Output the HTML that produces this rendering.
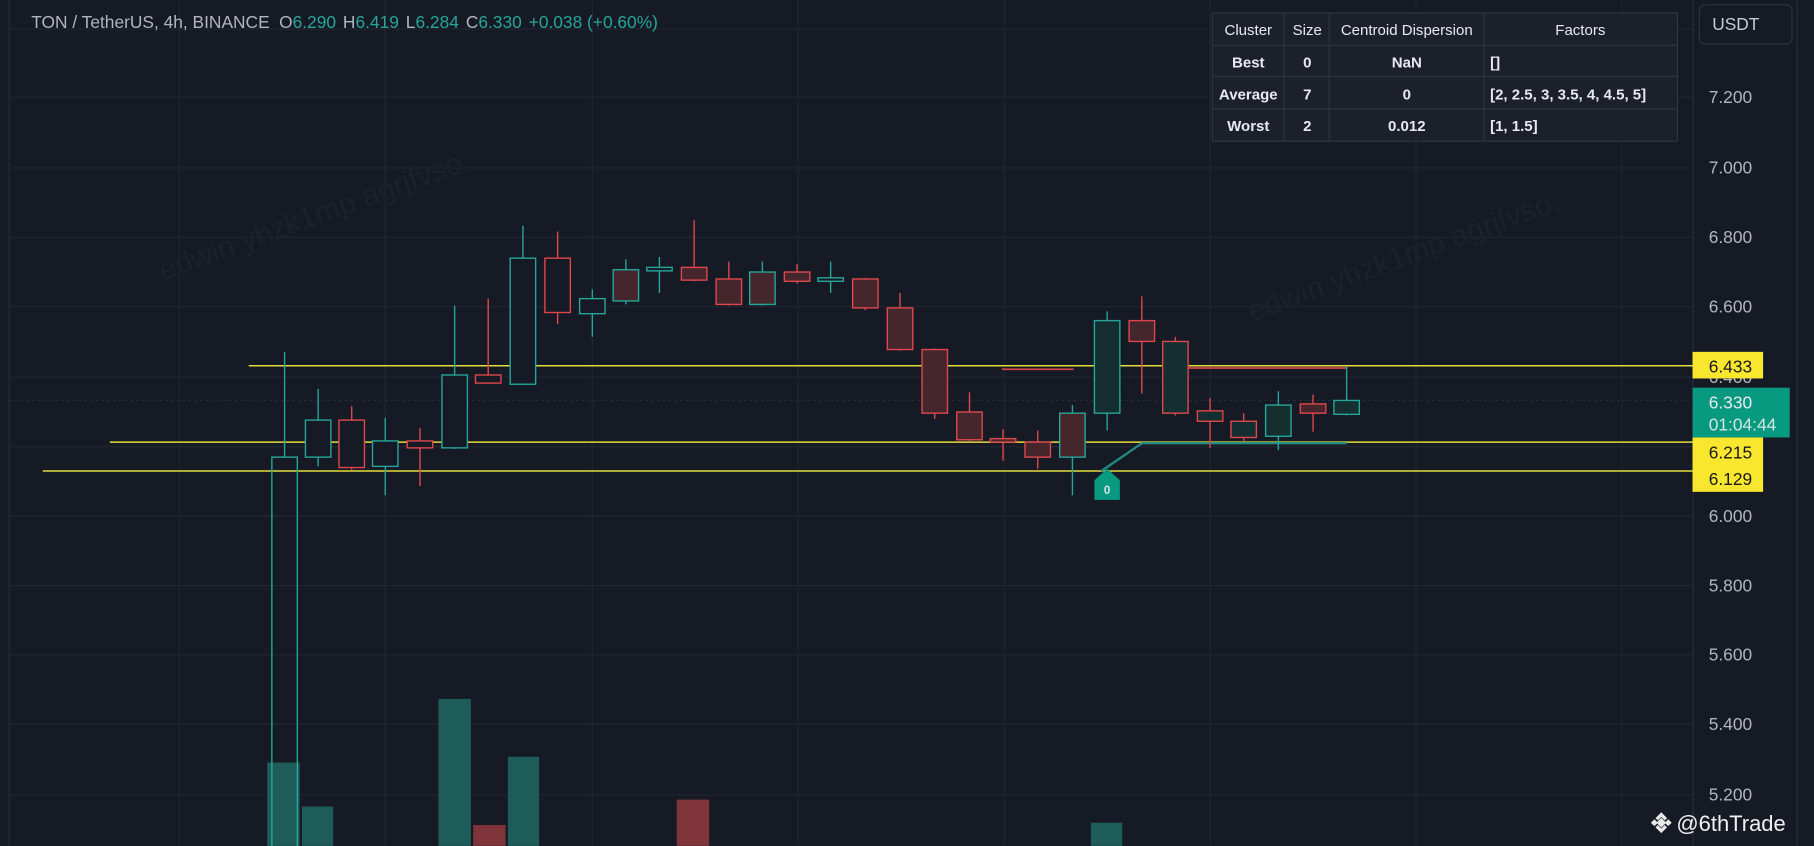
<!DOCTYPE html>
<html><head><meta charset="utf-8"><style>
html,body{margin:0;padding:0;background:#161a25;overflow:hidden}
svg{display:block}
text{font-family:"Liberation Sans","DejaVu Sans",sans-serif}
</style></head><body>
<svg width="1814" height="846" viewBox="0 0 1568 731" xmlns="http://www.w3.org/2000/svg">
<rect width="1568" height="731" fill="#161a25"/>
<!-- grid -->
<g stroke="#222631" stroke-width="1">
<line x1="8" y1="25" x2="1463" y2="25"/>
<line x1="8" y1="84" x2="1463" y2="84"/>
<line x1="8" y1="145" x2="1463" y2="145"/>
<line x1="8" y1="205" x2="1463" y2="205"/>
<line x1="8" y1="265" x2="1463" y2="265"/>
<line x1="8" y1="326" x2="1463" y2="326"/>
<line x1="8" y1="386" x2="1463" y2="386"/>
<line x1="8" y1="446" x2="1463" y2="446"/>
<line x1="8" y1="506" x2="1463" y2="506"/>
<line x1="8" y1="566" x2="1463" y2="566"/>
<line x1="8" y1="626" x2="1463" y2="626"/>
<line x1="8" y1="687" x2="1463" y2="687"/>
<line x1="155" y1="0" x2="155" y2="731"/>
<line x1="333" y1="0" x2="333" y2="731"/>
<line x1="512" y1="0" x2="512" y2="731"/>
<line x1="690" y1="0" x2="690" y2="731"/>
<line x1="868" y1="0" x2="868" y2="731"/>
<line x1="1046" y1="0" x2="1046" y2="731"/>
<line x1="1224" y1="0" x2="1224" y2="731"/>
<line x1="1402" y1="0" x2="1402" y2="731"/>
</g>
<line x1="8" y1="0" x2="8" y2="731" stroke="#2a2e39"/>
<line x1="1463.5" y1="0" x2="1463.5" y2="731" stroke="#2a2e39"/>
<line x1="1553.5" y1="0" x2="1553.5" y2="731" stroke="#2a2e39"/>
<line x1="8" y1="346" x2="1463" y2="346" stroke="#2a2e39" stroke-dasharray="2,3"/>
<!-- watermark -->
<text x="130" y="220" fill="#1d212c" font-size="26" transform="rotate(-20 200 200)">edwin yhzk1mp agrjfvso,</text>
<text x="1060" y="250" fill="#1d212c" font-size="26" transform="rotate(-20 1150 200)">edwin yhzk1mp agrjfvso,</text>
<!-- volume -->
<g fill="#1e5c5a">
<rect x="231" y="659" width="28" height="72"/>
<rect x="261" y="697" width="27" height="34"/>
<rect x="379" y="604" width="28" height="127"/>
<rect x="439" y="654" width="27" height="77"/>
<rect x="943" y="711" width="27" height="20"/>
</g>
<g fill="#7e3439">
<rect x="409" y="713" width="28" height="18"/>
<rect x="585" y="691" width="28" height="40"/>
</g>
<!-- yellow lines -->
<g stroke="#e3dc3c" stroke-width="1.3">
<line x1="215" y1="316" x2="1463" y2="316"/>
<line x1="95" y1="382" x2="1463" y2="382"/>
<line x1="37" y1="407" x2="1463" y2="407"/>
</g>
<g stroke="#d0464a" stroke-width="1.5">
<line x1="866" y1="319" x2="928" y2="319"/>
<line x1="1016" y1="318" x2="1164" y2="318"/>
</g>
<polyline points="952,407 987,383 1164,383" fill="none" stroke="#1f8a80" stroke-width="2"/>
<path d="M946,415 L957,405 L968,415 L968,432 L946,432 Z" fill="#089981"/>
<text x="957" y="427" fill="#e0e3eb" font-size="10" font-weight="bold" text-anchor="middle">0</text>
<!-- candles -->
<g stroke-width="1.2">
<g stroke="#26a69a" fill="#161a25">
<line x1="246" y1="304" x2="246" y2="395"/><rect x="235" y="395" width="22" height="340" fill="none"/>
<line x1="275" y1="336" x2="275" y2="403"/><rect x="264" y="363" width="22" height="32"/>
<line x1="333" y1="361" x2="333" y2="428"/><rect x="322" y="381" width="22" height="22"/>
<line x1="393" y1="264" x2="393" y2="388"/><rect x="382" y="324" width="22" height="63"/>
<line x1="452" y1="195" x2="452" y2="332"/><rect x="441" y="223" width="22" height="109"/>
<line x1="512" y1="250" x2="512" y2="291"/><rect x="501" y="258" width="22" height="13"/>
<line x1="541" y1="224" x2="541" y2="263"/><rect x="530" y="233" width="22" height="27" fill="#45262d"/>
<line x1="570" y1="222" x2="570" y2="253"/><rect x="559" y="231" width="22" height="3"/>
<line x1="659" y1="226" x2="659" y2="264"/><rect x="648" y="235" width="22" height="28" fill="#45262d"/>
<line x1="718" y1="226" x2="718" y2="253"/><rect x="707" y="240" width="22" height="3"/>
<line x1="927" y1="350" x2="927" y2="428"/><rect x="916" y="357" width="22" height="38" fill="#45262d"/>
<line x1="957" y1="269" x2="957" y2="372"/><rect x="946" y="277" width="22" height="80" fill="#152f30"/>
<line x1="1105" y1="338" x2="1105" y2="389"/><rect x="1094" y="350" width="22" height="27" fill="#152f30"/>
<line x1="1164" y1="317" x2="1164" y2="359"/><rect x="1153" y="346" width="22" height="12" fill="#152f30"/>
</g>
<g stroke="#e0474c" fill="#161a25">
<line x1="304" y1="351" x2="304" y2="406"/><rect x="293" y="363" width="22" height="41"/>
<line x1="363" y1="370" x2="363" y2="420"/><rect x="352" y="381" width="22" height="6"/>
<line x1="422" y1="258" x2="422" y2="332"/><rect x="411" y="324" width="22" height="7"/>
<line x1="482" y1="200" x2="482" y2="280"/><rect x="471" y="223" width="22" height="47"/>
<line x1="600" y1="190" x2="600" y2="243"/><rect x="589" y="231" width="22" height="11" fill="#45262d"/>
<line x1="630" y1="226" x2="630" y2="264"/><rect x="619" y="241" width="22" height="22" fill="#45262d"/>
<line x1="689" y1="228" x2="689" y2="245"/><rect x="678" y="235" width="22" height="8" fill="#45262d"/>
<line x1="748" y1="240" x2="748" y2="268"/><rect x="737" y="241" width="22" height="25" fill="#45262d"/>
<line x1="778" y1="253" x2="778" y2="303"/><rect x="767" y="266" width="22" height="36" fill="#45262d"/>
<line x1="808" y1="301" x2="808" y2="362"/><rect x="797" y="302" width="22" height="55" fill="#45262d"/>
<line x1="838" y1="339" x2="838" y2="381"/><rect x="827" y="356" width="22" height="24" fill="#45262d"/>
<line x1="867" y1="371" x2="867" y2="398"/><rect x="856" y="379" width="22" height="3" fill="#45262d"/>
<line x1="897" y1="372" x2="897" y2="405"/><rect x="886" y="382" width="22" height="13" fill="#45262d"/>
<line x1="987" y1="256" x2="987" y2="340"/><rect x="976" y="277" width="22" height="18" fill="#45262d"/>
<line x1="1016" y1="291" x2="1016" y2="359"/><rect x="1005" y="295" width="22" height="62" fill="#152f30"/>
<line x1="1046" y1="344" x2="1046" y2="387"/><rect x="1035" y="355" width="22" height="9" fill="#152f30"/>
<line x1="1075" y1="357" x2="1075" y2="381"/><rect x="1064" y="364" width="22" height="14" fill="#152f30"/>
<line x1="1135" y1="341" x2="1135" y2="373"/><rect x="1124" y="349" width="22" height="8" fill="#45262d"/>
</g>
</g>
<!-- header -->
<text x="27" y="24" font-size="15" fill="#b2b5be">TON / TetherUS, 4h, BINANCE <tspan dx="4">O</tspan><tspan fill="#26a69a">6.290</tspan><tspan dx="6">H</tspan><tspan fill="#26a69a">6.419</tspan><tspan dx="6">L</tspan><tspan fill="#26a69a">6.284</tspan><tspan dx="6">C</tspan><tspan fill="#26a69a">6.330</tspan><tspan dx="6" fill="#26a69a">+0.038 (+0.60%)</tspan></text>
<!-- table -->
<g>
<rect x="1048" y="11" width="402" height="111" fill="#1c202b" stroke="#30343f"/>
<g stroke="#30343f">
<line x1="1048" y1="39" x2="1450" y2="39"/><line x1="1048" y1="66" x2="1450" y2="66"/><line x1="1048" y1="94" x2="1450" y2="94"/>
<line x1="1110" y1="11" x2="1110" y2="122"/><line x1="1149" y1="11" x2="1149" y2="122"/><line x1="1283" y1="11" x2="1283" y2="122"/>
</g>
<g font-size="13" fill="#e8eaf0" text-anchor="middle" font-weight="bold">
<text x="1079" y="30" font-weight="normal">Cluster</text><text x="1130" y="30" font-weight="normal">Size</text><text x="1216" y="30" font-weight="normal">Centroid Dispersion</text><text x="1366" y="30" font-weight="normal">Factors</text>
<text x="1079" y="58">Best</text><text x="1130" y="58">0</text><text x="1216" y="58">NaN</text>
<text x="1079" y="86">Average</text><text x="1130" y="86">7</text><text x="1216" y="86">0</text>
<text x="1079" y="113">Worst</text><text x="1130" y="113">2</text><text x="1216" y="113">0.012</text>
</g>
<g font-size="13" fill="#e8eaf0" font-weight="bold">
<text x="1288" y="58">[]</text><text x="1288" y="86">[2, 2.5, 3, 3.5, 4, 4.5, 5]</text><text x="1288" y="113">[1, 1.5]</text>
</g>
</g>
<!-- axis -->
<rect x="1469" y="4" width="80" height="34" rx="5" fill="#161a25" stroke="#2f3340"/>
<text x="1480" y="26" font-size="15" fill="#c8cbd3">USDT</text>
<g font-size="15" fill="#b2b5be">
<text x="1477" y="89">7.200</text><text x="1477" y="150">7.000</text><text x="1477" y="210">6.800</text><text x="1477" y="270">6.600</text>
<text x="1477" y="331">6.400</text>
<text x="1477" y="451">6.000</text><text x="1477" y="511">5.800</text><text x="1477" y="571">5.600</text><text x="1477" y="631">5.400</text><text x="1477" y="692">5.200</text>
</g>
<rect x="1463" y="304" width="61" height="23" fill="#f9e72f"/>
<text x="1477" y="322" font-size="15" fill="#1a1a1a">6.433</text>
<rect x="1463" y="335" width="84" height="43" fill="#089981"/>
<text x="1477" y="353" font-size="15" fill="#e8eaf0">6.330</text>
<text x="1477" y="372" font-size="15" fill="#d0e8e4">01:04:44</text>
<rect x="1463" y="378" width="61" height="47" fill="#f9e72f"/>
<text x="1477" y="396" font-size="15" fill="#1a1a1a">6.215</text>
<text x="1477" y="419" font-size="15" fill="#1a1a1a">6.129</text>
<!-- brand -->
<g fill="#e8e8e8" transform="translate(1436 711)">
<rect x="-3" y="-3" width="6" height="6" transform="rotate(45)"/>
<path d="M-9,0 L-6,-3 L-3,0 L-6,3Z M9,0 L6,-3 L3,0 L6,3Z M0,-9 L5,-4 L3,-2 L0,-5 L-3,-2 L-5,-4Z M0,9 L5,4 L3,2 L0,5 L-3,2 L-5,4Z"/>
</g>
<text x="1449" y="718" font-size="19" fill="#f0f0f0">@6thTrade</text>
</svg>
</body></html>
